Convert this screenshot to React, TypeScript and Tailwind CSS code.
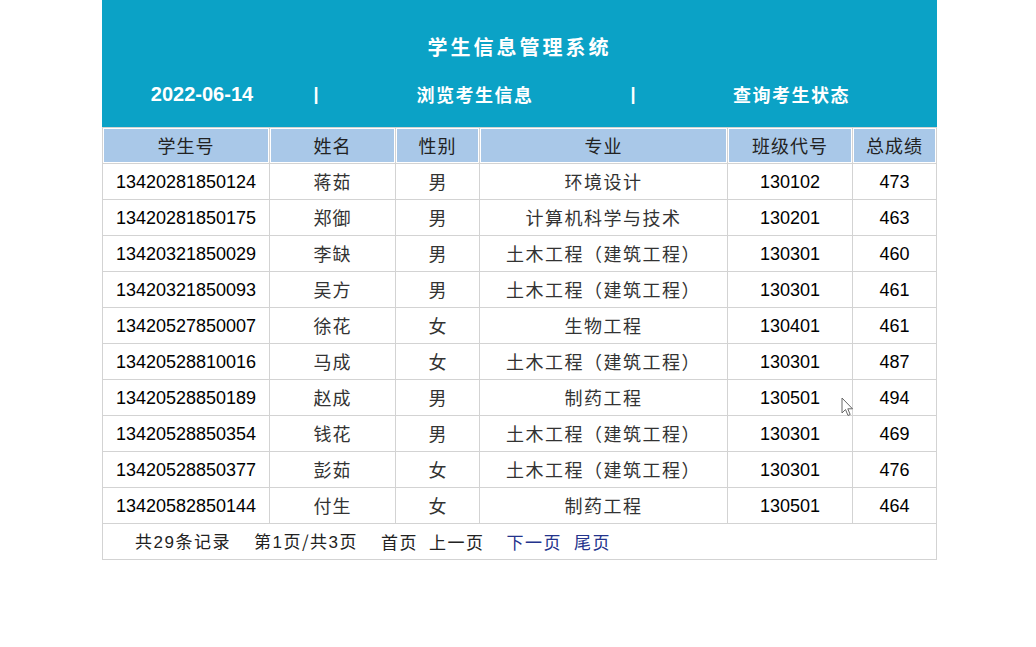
// App.tsx
const students = [
  { id: "13420281850124", name: "蒋茹", sex: "男", major: "环境设计", cls: "130102", score: 473 },
  { id: "13420281850175", name: "郑御", sex: "男", major: "计算机科学与技术", cls: "130201", score: 463 },
  { id: "13420321850029", name: "李缺", sex: "男", major: "土木工程（建筑工程）", cls: "130301", score: 460 },
  { id: "13420321850093", name: "吴方", sex: "男", major: "土木工程（建筑工程）", cls: "130301", score: 461 },
  { id: "13420527850007", name: "徐花", sex: "女", major: "生物工程", cls: "130401", score: 461 },
  { id: "13420528810016", name: "马成", sex: "女", major: "土木工程（建筑工程）", cls: "130301", score: 487 },
  { id: "13420528850189", name: "赵成", sex: "男", major: "制药工程", cls: "130501", score: 494 },
  { id: "13420528850354", name: "钱花", sex: "男", major: "土木工程（建筑工程）", cls: "130301", score: 469 },
  { id: "13420528850377", name: "彭茹", sex: "女", major: "土木工程（建筑工程）", cls: "130301", score: 476 },
  { id: "13420582850144", name: "付生", sex: "女", major: "制药工程", cls: "130501", score: 464 },
];

const cjk = "font-['Noto_Sans_CJK_SC',sans-serif]";
const num = "font-['Liberation_Sans','Noto_Sans_CJK_SC',sans-serif]";

const Header = () => (
  <div className="bg-[#0ba2c6] text-white pt-[32px] pb-[15px]">
    <h1 className={`${cjk} text-center text-[20px] leading-[30px] font-bold tracking-[3px]`}>
      学生信息管理系统
    </h1>
    <div className="flex items-center h-[36px] mt-[14px] text-[18px] font-bold">
      <div className={`${num} w-[200px] text-center text-[20px]`}>2022-06-14</div>
      <div className={`${num} w-[28px] text-center`}>|</div>
      <div className={`${cjk} w-[290px] text-center tracking-[1.5px]`}>浏览考生信息</div>
      <div className={`${num} w-[26px] text-center`}>|</div>
      <div className={`${cjk} flex-1 text-center tracking-[1.5px]`}>查询考生状态</div>
    </div>
  </div>
);

const heads = [
  { label: "学生号", w: "w-[167px]" },
  { label: "姓名", w: "w-[126px]" },
  { label: "性别", w: "w-[84px]" },
  { label: "专业", w: "w-[248px]" },
  { label: "班级代号", w: "w-[125px]" },
  { label: "总成绩", w: "w-[84px]" },
];

const StudentTable = () => (
  <table className="w-full border-collapse table-fixed border border-[#d3d3d3]">
    <thead>
      <tr>
        {heads.map((h) => (
          <th
            key={h.label}
            className={`${h.w} ${cjk} h-[36px] p-0 font-normal text-[18px] tracking-[1px] text-[#222] bg-[#a9c8e8] border border-[#d3d3d3] shadow-[inset_0_0_0_1px_#ffffff]`}
          >
            {h.label}
          </th>
        ))}
      </tr>
    </thead>
    <tbody>
      {students.map((s) => (
        <tr key={s.id} className="h-[36px]">
          <td className={`${num} p-0 pt-[1px] text-center text-[18px] text-black border border-[#d3d3d3]`}>{s.id}</td>
          <td className={`${cjk} p-0 text-center text-[18px] tracking-[1px] text-[#333] border border-[#d3d3d3]`}>{s.name}</td>
          <td className={`${cjk} p-0 text-center text-[18px] text-[#333] border border-[#d3d3d3]`}>{s.sex}</td>
          <td className={`${cjk} p-0 text-center text-[18px] tracking-[1.5px] text-[#333] border border-[#d3d3d3]`}>{s.major}</td>
          <td className={`${num} p-0 pt-[1px] text-center text-[18px] text-black border border-[#d3d3d3]`}>{s.cls}</td>
          <td className={`${num} p-0 pt-[1px] text-center text-[18px] text-black border border-[#d3d3d3]`}>{s.score}</td>
        </tr>
      ))}
      <tr className="h-[36px]">
        <td colSpan={6} className="p-0 pl-[32px] border border-[#d3d3d3]">
          <div className={`${cjk} flex items-center text-[17px] tracking-[1.5px] text-[#222]`}>
            <span>共<span className={num}>29</span>条记录</span>
            <span className="ml-[23px]">第<span className={num}>1</span>页/共<span className={num}>3</span>页</span>
            <span className="ml-[23px]">首页</span>
            <span className="ml-[11px]">上一页</span>
            <span className="ml-[22px] text-[#23338c]">下一页</span>
            <span className="ml-[12px] text-[#23338c]">尾页</span>
          </div>
        </td>
      </tr>
    </tbody>
  </table>
);

const Cursor = () => (
  <svg className="absolute left-[841px] top-[397px]" width="14" height="20" viewBox="0 0 14 20">
    <path d="M1 1 L1 16 L4.5 12.5 L7 18.5 L9.2 17.5 L6.8 11.8 L11.5 11.8 Z" fill="#fff" stroke="#666" strokeWidth="1" />
  </svg>
);

export default function App() {
  return (
    <div className="relative min-h-[647px] bg-white">
      <div className="ml-[102px] w-[835px]">
        <Header />
        <StudentTable />
      </div>
      <Cursor />
    </div>
  );
}
